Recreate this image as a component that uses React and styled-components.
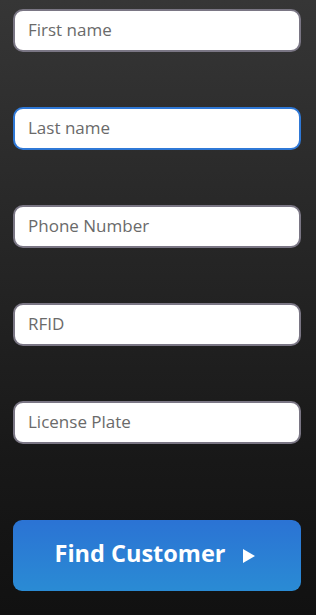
import React from 'react'
import styled, { createGlobalStyle } from 'styled-components'

const GlobalStyle = createGlobalStyle`
    html, body {
        margin: 0;
        padding: 0;
    }
    body {
        background: #111;
        font-family: "Open Sans", "Noto Sans", sans-serif;
    }
`

// styled components
const Page = styled.div`
    width: 316px;
    height: 615px;
    box-sizing: border-box;
    padding: 9px 15px 0 13px;
    background: linear-gradient(to bottom, #363636 0%, #262626 40%, #181818 75%, #111 100%);
    display: flex;
    flex-direction: column;
    gap: 55px;
`

const Input = styled.input`
    box-sizing: border-box;
    width: 288px;
    height: 43px;
    padding: 0 13px 2px;
    border: 2px solid ${p => (p.$focused ? '#2f78d6' : '#7a7684')};
    border-radius: 10px;
    background: #fff;
    font-family: "Open Sans", "Noto Sans", sans-serif;
    font-size: 17px;
    color: #333;
    outline: none;
    &::placeholder {
        color: #6a6a6a;
    }
`

const Button = styled.button`
    box-sizing: border-box;
    width: 288px;
    height: 71px;
    margin-top: 21px;
    border: none;
    border-radius: 9px;
    background: linear-gradient(to bottom, #2b73d4, #2a8bd4);
    color: #fff;
    font-family: "Open Sans", "Noto Sans", sans-serif;
    font-weight: 700;
    font-size: 23.5px;
    display: flex;
    align-items: center;
    justify-content: center;
    gap: 18px;
    padding: 0 4px 5px 0;
    cursor: pointer;
`

const Arrow = styled.span`
    width: 0;
    height: 0;
    margin-top: 5px;
    border-top: 7px solid transparent;
    border-bottom: 7px solid transparent;
    border-left: 12px solid #fff;
`

const fields = ['First name', 'Last name', 'Phone Number', 'RFID', 'License Plate']

const App = () => {
    return (
        <>
            <GlobalStyle />
            <Page>
                {fields.map((f, i) => (
                    <Input key={f} placeholder={f} $focused={i === 1} />
                ))}
                <Button>
                    Find Customer
                    <Arrow />
                </Button>
            </Page>
        </>
    )
}

export default App
